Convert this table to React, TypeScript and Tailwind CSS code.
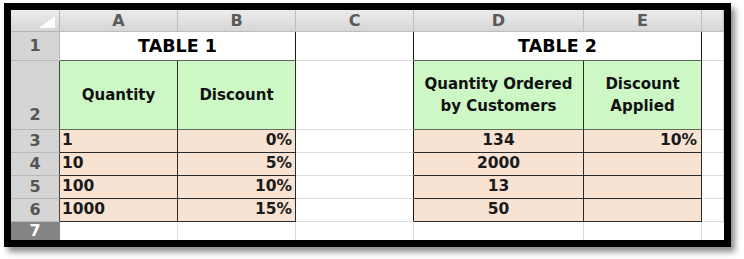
const cols = ["A", "B", "C", "D", "E", ""];

const rowHdr = "flex items-center justify-center bg-[#d5d5d5] border-b border-r border-[#b9b9b9] text-[16px] font-bold text-[#555]";
const grid = "border-b border-r border-[#dadada] bg-white";
const dark = "border-[#2a2a2a]";
const head = "flex items-center justify-center text-center leading-[22px] bg-[#cdf8c6] border-r border-b border-[#2a2a2a] border-b-[#5d6f55] text-[15px] font-bold";
const cell = "flex items-center bg-[#f8e2d2] border-r border-b border-[#2a2a2a] text-[15.5px] font-bold text-[#1a1a1a]";

const data = [
  ["1", "0%", "134", "10%"],
  ["10", "5%", "2000", ""],
  ["100", "10%", "13", ""],
  ["1000", "15%", "50", ""],
];

export default function App() {
  return (
    <div className="w-[744px] h-[259px] bg-white pt-[3px] pl-[4px]" style={{ fontFamily: '"DejaVu Sans", sans-serif' }}>
      <div className="w-[727px] h-[244px] border-[7px] border-black shadow-[4px_5px_6px_rgba(0,0,0,0.45)]">
        <div className="grid grid-cols-[49px_118px_118px_118px_170px_118px_22px] grid-rows-[22px_29px_69px_23px_23px_23px_23px_18px] bg-white text-[#111]">
          {/* column headers */}
          <div className="relative bg-gradient-to-b from-[#ececec] to-[#d6d6d6] border-r border-b border-[#b5b5b5]">
            <div className="absolute right-[4px] bottom-[3px] w-0 h-0 border-l-[16px] border-l-transparent border-b-[12px] border-b-white" />
          </div>
          {cols.map((c, i) => (
            <div
              key={i}
              className="flex items-center justify-center bg-gradient-to-b from-[#ececec] to-[#d6d6d6] border-r border-b border-[#bdbdbd] text-[16px] font-bold text-[#5a5a5a]"
            >
              {c}
            </div>
          ))}

          {/* row 1 */}
          <div className={rowHdr}>1</div>
          <div className="col-span-2 flex items-center justify-center bg-white border-r border-r-[#1a1a1a] border-b border-b-[#5b6b55] text-[17.5px] font-bold text-black">
            TABLE 1
          </div>
          <div className={`${grid} border-r-[#1a1a1a]`} />
          <div className="col-span-2 flex items-center justify-center bg-white border-r border-r-[#1a1a1a] border-b border-b-[#5b6b55] text-[17.5px] font-bold text-black">
            TABLE 2
          </div>
          <div className={grid} />

          {/* row 2 */}
          <div className={`${rowHdr} items-end pb-[2px] border-r-[#444]`}>2</div>
          <div className={head}>Quantity</div>
          <div className={head}>Discount</div>
          <div className={`${grid} border-r-[#1a1a1a]`} />
          <div className={head}>
            Quantity Ordered
            <br />
            by Customers
          </div>
          <div className={head}>
            Discount
            <br />
            Applied
          </div>
          <div className={grid} />

          {/* rows 3-6 */}
          {data.map((r, i) => (
            <div key={i} className="contents">
              <div className={`${rowHdr} border-r-[#444]`}>{i + 3}</div>
              <div className={`${cell} px-[2px]`}>{r[0]}</div>
              <div className={`${cell} justify-end px-[3px]`}>{r[1]}</div>
              <div className={`${grid} border-r-[#1a1a1a]`} />
              <div className={`${cell} justify-center`}>{r[2]}</div>
              <div className={`${cell} justify-end px-[4px]`}>{r[3]}</div>
              <div className={grid} />
            </div>
          ))}

          {/* row 7 */}
          <div className={`flex items-center justify-center bg-[#858585] border-r ${dark} border-[#858585] text-[16px] font-bold text-white`}>7</div>
          <div className="border-r border-[#dadada]" />
          <div className="border-r border-[#dadada]" />
          <div className="border-r border-[#dadada]" />
          <div className="border-r border-[#dadada]" />
          <div className="border-r border-[#dadada]" />
          <div />
        </div>
      </div>
    </div>
  );
}
